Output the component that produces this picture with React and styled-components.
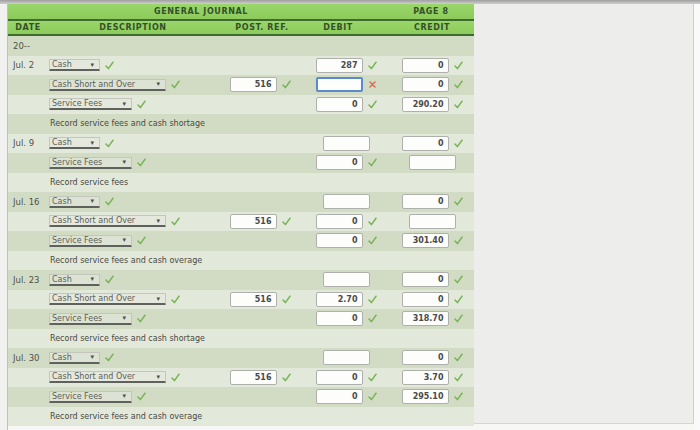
import React from 'react';
import styled, { createGlobalStyle } from 'styled-components';

const GlobalStyle = createGlobalStyle`
  html, body {
    margin: 0;
    padding: 0;
    background: #ffffff;
  }
  * {
    box-sizing: border-box;
  }
`;

const COLS = '40px 170px 84px 88px 84px';

const CSO = 'Cash Short and Over';
const SF = 'Service Fees';

// one entry per journal line; debit/credit: [value, mark] where mark is ok | bad | none
const rows = [
  { date: '20--' },
  { date: 'Jul. 2', acct: 'Cash', w: 51, debit: ['287', 'ok'], credit: ['0', 'ok'] },
  { acct: CSO, w: 117, ref: '516', debit: ['', 'bad'], credit: ['0', 'ok'] },
  { acct: SF, w: 83, debit: ['0', 'ok'], credit: ['290.20', 'ok'] },
  { memo: 'Record service fees and cash shortage' },
  { date: 'Jul. 9', acct: 'Cash', w: 51, debit: ['', 'none'], credit: ['0', 'ok'] },
  { acct: SF, w: 83, debit: ['0', 'ok'], credit: ['', 'none'] },
  { memo: 'Record service fees' },
  { date: 'Jul. 16', acct: 'Cash', w: 51, debit: ['', 'none'], credit: ['0', 'ok'] },
  { acct: CSO, w: 117, ref: '516', debit: ['0', 'ok'], credit: ['', 'none'] },
  { acct: SF, w: 83, debit: ['0', 'ok'], credit: ['301.40', 'ok'] },
  { memo: 'Record service fees and cash overage' },
  { date: 'Jul. 23', acct: 'Cash', w: 51, debit: ['', 'none'], credit: ['0', 'ok'] },
  { acct: CSO, w: 117, ref: '516', debit: ['2.70', 'ok'], credit: ['0', 'ok'] },
  { acct: SF, w: 83, debit: ['0', 'ok'], credit: ['318.70', 'ok'] },
  { memo: 'Record service fees and cash shortage' },
  { date: 'Jul. 30', acct: 'Cash', w: 51, debit: ['', 'none'], credit: ['0', 'ok'] },
  { acct: CSO, w: 117, ref: '516', debit: ['0', 'ok'], credit: ['3.70', 'ok'] },
  { acct: SF, w: 83, debit: ['0', 'ok'], credit: ['295.10', 'ok'] },
  { memo: 'Record service fees and cash overage' },
];

const Check = () => (
  <MarkBox>
    <svg width="9" height="9" viewBox="0 0 9 9">
      <path d="M1 5 L3.4 7.6 L8 1.2" fill="none" stroke="#78b457" strokeWidth="1.5" strokeLinecap="round" strokeLinejoin="round" />
    </svg>
  </MarkBox>
);

const Cross = () => (
  <MarkBox>
    <svg width="9" height="9" viewBox="0 0 9 9">
      <path d="M2 2 L7 7 M7 2 L2 7" fill="none" stroke="#e5674c" strokeWidth="1.5" strokeLinecap="round" />
    </svg>
  </MarkBox>
);

const Amount = ({ value, mark }) => (
  <AmountGroup>
    <Field $bad={mark === 'bad'}>{value}</Field>
    {mark === 'ok' && <Check />}
    {mark === 'bad' && <Cross />}
  </AmountGroup>
);

const Account = ({ name, width }) => (
  <AccountGroup>
    <Select style={{ width }}>
      <span>{name}</span>
      <Arrow>▾</Arrow>
    </Select>
    <Check />
  </AccountGroup>
);

const App = () => {
  return (
    <Screen>
      <GlobalStyle />
      <TopStrip />
      <Body>
        <Gutter />
        <Journal>
          <HeadRow $h={15}>
            <HeadCell />
            <HeadCell $shift={26} style={{ gridColumn: '2 / 4' }}>GENERAL JOURNAL</HeadCell>
            <HeadCell />
            <HeadCell $shift={-1}>PAGE 8</HeadCell>
          </HeadRow>
          <HeadLine />
          <HeadRow $h={13}>
            <HeadCell>DATE</HeadCell>
            <HeadCell>DESCRIPTION</HeadCell>
            <HeadCell $shift={2}>POST. REF.</HeadCell>
            <HeadCell $shift={-8}>DEBIT</HeadCell>
            <HeadCell>CREDIT</HeadCell>
          </HeadRow>
          <HeadLine />
          {rows.map((r, i) => (
            <Row key={i} $dark={i % 2 === 0}>
              <DateCell>{r.date}</DateCell>
              <DescCell>
                {r.acct && <Account name={r.acct} width={r.w} />}
                {r.memo && <Memo>{r.memo}</Memo>}
              </DescCell>
              <MoneyCell>{r.ref && <Amount value={r.ref} mark="ok" />}</MoneyCell>
              <MoneyCell>{r.debit && <Amount value={r.debit[0]} mark={r.debit[1]} />}</MoneyCell>
              <MoneyCell>{r.credit && <Amount value={r.credit[0]} mark={r.credit[1]} />}</MoneyCell>
            </Row>
          ))}
        </Journal>
        <Blank />
        <Margin />
      </Body>
    </Screen>
  );
};

const Screen = styled.div`
  width: 700px;
  height: 430px;
  overflow: hidden;
  display: flex;
  flex-direction: column;
  background: #f7f7f5;
  font-family: 'DejaVu Sans', 'Liberation Sans', sans-serif;
`;

const TopStrip = styled.div`
  height: 4px;
  flex: none;
  background: linear-gradient(#9f9f9f, #cfcfcf);
`;

const Body = styled.div`
  flex: 1;
  display: flex;
  align-items: flex-start;
  min-height: 0;
`;

const Gutter = styled.div`
  width: 8px;
  align-self: stretch;
  background: #f1f1ef;
  border-right: 1px solid #bfc0bc;
`;

const Journal = styled.div`
  width: 466px;
  flex: none;
  display: flex;
  flex-direction: column;
`;

const HeadRow = styled.div`
  display: grid;
  grid-template-columns: ${COLS};
  height: ${(p) => p.$h}px;
  background: linear-gradient(#9ad66a, #8ccb5b);
`;

const HeadLine = styled.div`
  height: 2px;
  background: #3f6a30;
`;

const HeadCell = styled.div`
  display: flex;
  align-items: center;
  justify-content: center;
  padding-left: ${(p) => (p.$shift > 0 ? p.$shift * 2 : 0)}px;
  padding-right: ${(p) => (p.$shift < 0 ? -p.$shift * 2 : 0)}px;
  font-size: 8px;
  font-weight: bold;
  letter-spacing: 0.6px;
  color: #33502a;
  white-space: nowrap;
`;

const Row = styled.div`
  display: grid;
  grid-template-columns: ${COLS};
  height: 19.5px;
  align-items: center;
  background: ${(p) => (p.$dark ? '#d2dcc4' : '#e3e9da')};
`;

const DateCell = styled.div`
  padding-left: 5px;
  font-size: 8.5px;
  color: #4d5249;
  white-space: nowrap;
`;

const DescCell = styled.div`
  padding-left: 1px;
  display: flex;
  align-items: center;
`;

const Memo = styled.span`
  padding-left: 1px;
  font-size: 8px;
  color: #474a44;
  white-space: nowrap;
`;

const AccountGroup = styled.div`
  display: flex;
  align-items: center;
  gap: 5px;
`;

const Select = styled.div`
  height: 12px;
  display: flex;
  align-items: center;
  justify-content: space-between;
  padding: 0 5px 0 2px;
  font-size: 8px;
  color: #5b5e58;
  background: rgba(228, 231, 224, 0.6);
  border: 1px solid #c2c6bd;
  border-bottom: 2px solid #5f625c;
  border-radius: 1px;
  white-space: nowrap;
`;

const Arrow = styled.span`
  font-size: 7px;
  color: #4e4e4e;
`;

const MoneyCell = styled.div`
  display: flex;
  justify-content: center;
  align-items: center;
`;

const AmountGroup = styled.div`
  display: flex;
  align-items: center;
  gap: 5px;
`;

const Field = styled.div`
  width: 47px;
  height: 15px;
  display: flex;
  align-items: center;
  justify-content: flex-end;
  padding-right: 4px;
  background: #fdfdfc;
  border: ${(p) => (p.$bad ? '2px solid #5b8bcc' : '1px solid #aeb0ab')};
  border-radius: 2px;
  font-size: 8px;
  font-weight: bold;
  color: #4a4a4a;
`;

const MarkBox = styled.span`
  width: 9px;
  height: 9px;
  display: inline-flex;
`;

const Blank = styled.div`
  flex: 1;
  height: 420px;
  background: #ededeb;
  border-right: 1px solid #cfcfcd;
  border-bottom: 1px solid #d4d4d2;
`;

const Margin = styled.div`
  width: 6px;
  align-self: stretch;
  background: #fafafa;
`;

export default App;
